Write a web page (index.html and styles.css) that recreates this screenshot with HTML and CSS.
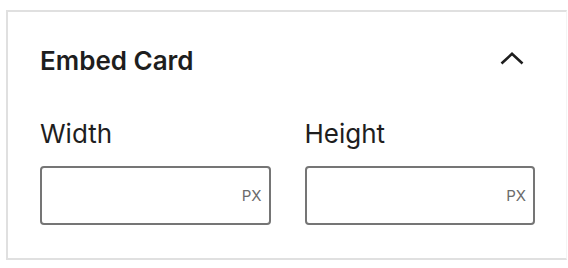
FILE: index.html
```html
<!DOCTYPE html>
<html>
<head>
    <title>Embed Card</title>
    <link rel="stylesheet" href="styles.css">
</head>
<body>

    <div class="panel">
        <div class="head">
            <h2 class="title">Embed Card</h2>
            <svg class="chev" width="24" height="14" viewBox="0 0 24 14">
                <polyline points="1.5,11.5 12,1.8 22.5,11.5" fill="none" stroke="#1e1e1e" stroke-width="2.6"/>
            </svg>
        </div>
        <div class="fields">
            <div class="field">
                <label class="lbl">Width</label>
                <div class="box"><input class="inp" type="text"><span class="unit">PX</span></div>
            </div>
            <div class="field">
                <label class="lbl">Height</label>
                <div class="box"><input class="inp" type="text"><span class="unit">PX</span></div>
            </div>
        </div>
    </div>

</body>
</html>
```

FILE: styles.css
```css
body{
    margin: 0;
    background-color: white;
    font-family: Inter, "Liberation Sans", sans-serif;
    color: #1e1e1e;
}

.panel{
    margin: 10px 1px 0 6px;
    border-left: 2px solid #e0e0e0;
    border-top: 2px solid #e0e0e0;
    border-bottom: 2px solid #e0e0e0;
    border-right: 1px solid #f4f4f4;
    height: 246px;
    box-sizing: content-box;
}

.head{
    display: flex;
    justify-content: space-between;
    align-items: flex-start;
    padding: 34px 42px 0 32px;
}
.title{
    margin: 0;
    font-size: 26px;
    font-weight: 600;
    line-height: 30px;
}
.chev{
    margin-top: 6px;
    display: block;
}

.fields{
    display: grid;
    grid-template-columns: minmax(0, 1fr) minmax(0, 1fr);
    column-gap: 34px;
    padding: 43px 31px 0 32px;
}
.field{
    min-width: 0;
}
.lbl{
    display: block;
    font-size: 26px;
    line-height: 30px;
    margin-bottom: 17px;
}
.box{
    display: flex;
    align-items: center;
    height: 59px;
    box-sizing: border-box;
    border: 2px solid #757575;
    border-radius: 4px;
    padding-right: 7px;
}
.inp{
    flex: 1;
    width: 0;
    min-width: 0;
    border: none;
    outline: none;
    background: transparent;
    font-family: Inter, "Liberation Sans", sans-serif;
    font-size: 18px;
}
.unit{
    font-size: 15px;
    color: #6b6b6b;
}
```
